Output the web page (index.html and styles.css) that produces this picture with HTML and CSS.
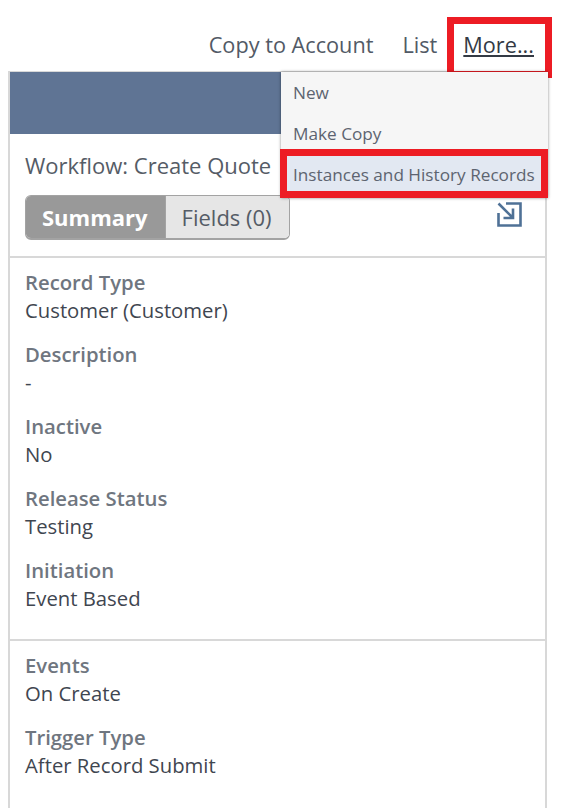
FILE: index.html
```html
<!DOCTYPE html>
<html lang="en">
<head>
  <meta charset="UTF-8">
  <title>Workflow: Create Quote</title>
  <link rel="stylesheet" href="styles.css">
</head>
<body>
  <nav class="top-links">
    <a href="#">Copy to Account</a>
    <a href="#">List</a>
    <a href="#" class="more">More...</a>
  </nav>

  <div class="panel">
    <div class="panel-header"></div>
    <div class="panel-head">
      <h1>Workflow: Create Quote</h1>
      <div class="tab-row">
        <div class="tabs">
          <span class="tab active">Summary</span>
          <span class="tab">Fields (0)</span>
        </div>
        <svg class="open-icon" width="28" height="28" viewBox="0 0 28 28" fill="none" stroke="#4f7196" stroke-width="2.6">
          <path d="M11 3.5H25.5V25.5H3.5V13"/>
          <path d="M3.5 3.5L18 18M18 8.5V18H8.5"/>
        </svg>
      </div>
    </div>

    <div class="section">
      <div class="field"><div class="label">Record Type</div><div class="value">Customer (Customer)</div></div>
      <div class="field"><div class="label">Description</div><div class="value">-</div></div>
      <div class="field"><div class="label">Inactive</div><div class="value">No</div></div>
      <div class="field"><div class="label">Release Status</div><div class="value">Testing</div></div>
      <div class="field"><div class="label">Initiation</div><div class="value">Event Based</div></div>
    </div>

    <div class="section">
      <div class="field"><div class="label">Events</div><div class="value">On Create</div></div>
      <div class="field"><div class="label">Trigger Type</div><div class="value">After Record Submit</div></div>
    </div>
  </div>

  <div class="menu">
    <div class="menu-item">New</div>
    <div class="menu-item">Make Copy</div>
    <div class="menu-item selected">Instances and History Records</div>
  </div>
</body>
</html>
```

FILE: styles.css
```css
html, body {
  height: 100%;
}
body {
  margin: 0;
  height: 808px;
  overflow: hidden;
  position: relative;
  background: #fff;
  font-family: "Open Sans", sans-serif;
  color: #3f4650;
}
.top-links {
  display: flex;
  justify-content: flex-end;
  align-items: center;
  height: 71px;
  padding: 0 35px 0 0;
  font-size: 21.7px;
  box-sizing: border-box;
}
.top-links a {
  color: #525a66;
  text-decoration: none;
  margin-left: 29px;
  position: relative;
  top: 9px;
}
.top-links a.more {
  margin-left: 26px;
  color: #333a44;
  text-decoration: underline;
}
.top-links a.more::after {
  content: "";
  position: absolute;
  left: -16px;
  top: -13px;
  width: 91px;
  height: 47px;
  border: 7px solid #ed1c24;
}
.panel {
  margin-left: 8px;
  width: 539px;
  height: 737px;
  box-sizing: border-box;
  border: 2px solid #d8d8d8;
  border-bottom: none;
  border-top-width: 1px;
}
.panel-header {
  height: 62px;
  background: #5f7494;
}
.panel-head {
  padding: 18px 15px 16px;
  border-bottom: 2px solid #d8d8d8;
}
h1 {
  margin: 0 0 16px;
  font-size: 22px;
  line-height: 27px;
  font-weight: 400;
  color: #555c66;
}
.tab-row {
  display: flex;
  justify-content: space-between;
  align-items: flex-start;
}
.tabs {
  display: flex;
  height: 45px;
  box-sizing: border-box;
  border: 1px solid #a3a3a3;
  border-bottom-width: 2px;
  border-radius: 6px;
  overflow: hidden;
  font-size: 22px;
  line-height: 42px;
}
.tab {
  padding: 0 17px 0 16px;
  background: #e6e6e6;
  color: #555c66;
}
.tab.active {
  padding: 0 17px 0 16px;
  border-right: 1px solid #a3a3a3;
  background: #999;
  color: #fff;
  font-weight: 700;
}
.open-icon {
  margin: 5px 7px 0 0;
}
.section {
  padding: 10px 15px 11px;
  border-bottom: 2px solid #d8d8d8;
}
.section:last-child {
  border-bottom: none;
}
.field {
  margin-bottom: 16px;
  font-size: 20.3px;
  line-height: 28px;
}
.label {
  font-weight: 600;
  color: #6f7680;
}
.value {
  color: #3f4650;
}
.menu {
  position: absolute;
  left: 281px;
  top: 72px;
  width: 267px;
  height: 126px;
  box-sizing: border-box;
  background: #f6f6f6;
  box-shadow: 0 0 3px rgba(0,0,0,0.45);
  font-size: 17.2px;
  color: #5d6470;
}
.menu-item {
  height: 41px;
  line-height: 41px;
  padding-left: 12px;
}
.menu-item.selected {
  position: absolute;
  left: -1px;
  top: 77px;
  width: 268px;
  height: 49px;
  box-sizing: border-box;
  padding-left: 6px;
  line-height: 37px;
  background: #e2e8f2;
  border: 7px solid #ed1c24;
}
```
